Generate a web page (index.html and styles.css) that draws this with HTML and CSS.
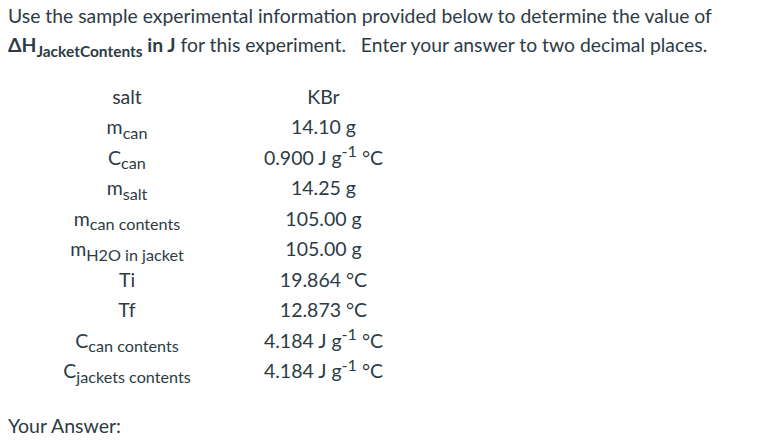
FILE: index.html
```html
<!DOCTYPE html>
<html>
<head>
<meta charset="utf-8">
<link rel="stylesheet" href="styles.css">
</head>
<body>
<div class="question">
  <p class="prompt">Use the sample experimental information provided below to determine the value of <strong>ΔH<sub>JacketContents</sub> in J</strong> for this experiment.&nbsp;&nbsp; Enter your answer to two decimal places.</p>
  <table class="data">
    <tbody>
      <tr><td>salt</td><td>KBr</td></tr>
      <tr><td>m<sub>can</sub></td><td>14.10 g</td></tr>
      <tr><td>C<sub>can</sub></td><td>0.900 J g<sup>-1</sup> °C</td></tr>
      <tr><td>m<sub>salt</sub></td><td>14.25 g</td></tr>
      <tr><td>m<sub>can contents</sub></td><td>105.00 g</td></tr>
      <tr><td>m<sub>H2O in jacket</sub></td><td>105.00 g</td></tr>
      <tr><td>Ti</td><td>19.864 °C</td></tr>
      <tr><td>Tf</td><td>12.873 °C</td></tr>
      <tr><td>C<sub>can contents</sub></td><td>4.184 J g<sup>-1</sup> °C</td></tr>
      <tr><td>C<sub>jackets contents</sub></td><td>4.184 J g<sup>-1</sup> °C</td></tr>
    </tbody>
  </table>
  <div class="answer">Your Answer:</div>
</div>
</body>
</html>
```
FILE: styles.css
```css
html, body {
  margin: 0;
  padding: 0;
  background: #ffffff;
}
body {
  font-family: Lato, "Open Sans", sans-serif;
  font-size: 19.5px;
  color: #2d3b45;
  line-height: 1.4;
}
.question {
  padding: 0 8px;
}
.prompt {
  margin: 0;
  padding-top: 1px;
  font-size: 19.35px;
  line-height: 1.5;
}
.prompt strong {
  font-weight: 700;
}
.data {
  border-collapse: collapse;
  margin: 22px 0 0 44px;
}
.data td {
  text-align: center;
  padding: 1.6px 0;
}
.data td:first-child {
  width: 150px;
}
.data td:last-child {
  width: 243px;
}
sub, sup {
  font-size: 83%;
  line-height: 0;
  position: relative;
  vertical-align: baseline;
}
sub { bottom: -0.3em; }
sup { top: -0.45em; }
.prompt sub {
  font-size: 80%;
}
.answer {
  margin-top: 26px;
}
```
